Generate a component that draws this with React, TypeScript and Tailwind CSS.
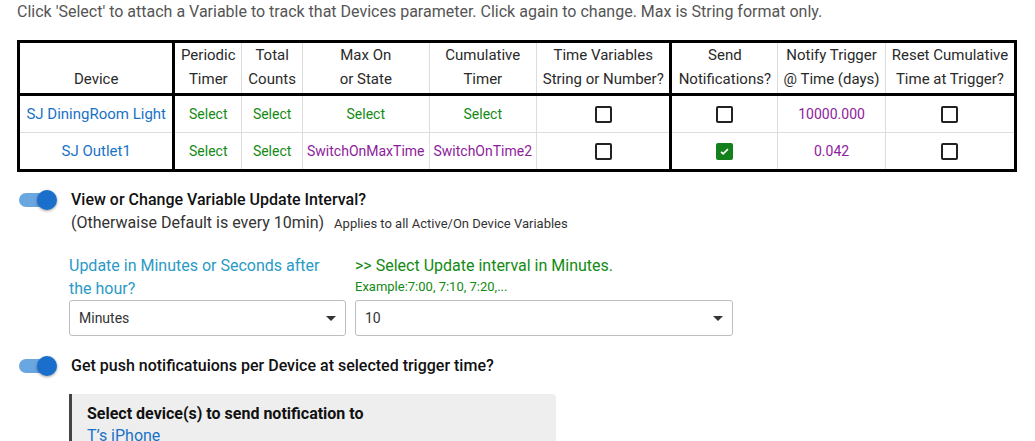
import React from 'react';

const font = { fontFamily: 'Roboto, "Noto Sans", Arial, sans-serif' };

function Checkbox({ checked }: { checked?: boolean }) {
  if (checked) {
    return (
      <span className="inline-flex h-[17px] w-[17px] items-center justify-center rounded-[2px] bg-[#14801c] align-middle">
        <svg viewBox="0 0 16 16" className="h-[11px] w-[11px]">
          <path d="M3 8.5l3 3 7-7" fill="none" stroke="#fff" strokeWidth="2.4" />
        </svg>
      </span>
    );
  }
  return <span className="inline-block h-[17px] w-[17px] rounded-[2px] border-2 border-[#222] align-middle" />;
}

function Toggle() {
  return (
    <div className="relative h-[20px] w-[38px] shrink-0">
      <div className="absolute left-0 top-[3px] h-[14px] w-[34px] rounded-full bg-[#6aa6e0]" />
      <div className="absolute right-0 top-0 h-[20px] w-[20px] rounded-full bg-[#1b6fcc] shadow-[0_1px_3px_rgba(0,0,0,0.4)]" />
    </div>
  );
}

function Select({ value, className }: { value: string; className: string }) {
  return (
    <div className={`flex h-[36px] items-center justify-between rounded-[3px] border border-[#bdbdbd] bg-white pl-[9px] pr-[9px] text-[14px] text-[#333] ${className}`}>
      <span>{value}</span>
      <svg viewBox="0 0 10 5" className="h-[5px] w-[10px]">
        <path d="M0 0h10L5 5z" fill="#333" />
      </svg>
    </div>
  );
}

const th = 'px-1 pt-0 pb-[2px] align-bottom font-normal leading-[24px] text-[15px] text-[#2a2a2a]';
const td = 'h-[38px] px-1 py-0 text-center align-middle';

export default function App() {
  return (
    <div className="min-h-screen bg-white text-[#222]" style={font}>
      <p className="px-[17px] pt-[1px] text-[16px] leading-[22px] text-[#555]">
        Click 'Select' to attach a Variable to track that Devices parameter. Click again to change. Max is String format only.
      </p>

      <table className="ml-[17px] mt-[17px] w-[1000px] border-collapse border-[3px] border-black text-center">
        <colgroup>
          <col className="w-[158px]" />
          <col className="w-[68px]" />
          <col className="w-[61px]" />
          <col className="w-[123px]" />
          <col className="w-[105px]" />
          <col className="w-[137px]" />
          <col className="w-[107px]" />
          <col className="w-[109px]" />
          <col className="w-[132px]" />
        </colgroup>
        <thead>
          <tr className="border-b-[3px] border-black">
            <th className={`${th} border-r-[3px] border-black`}>Device</th>
            <th className={`${th} border-r border-[#ddd]`}>Periodic<br />Timer</th>
            <th className={`${th} border-r border-[#ddd]`}>Total<br />Counts</th>
            <th className={`${th} border-r border-[#ddd]`}>Max On<br />or State</th>
            <th className={`${th} border-r border-[#ddd]`}>Cumulative<br />Timer</th>
            <th className={`${th} border-r-[3px] border-black`}>Time Variables<br />String or Number?</th>
            <th className={`${th} border-r border-[#ddd]`}>Send<br />Notifications?</th>
            <th className={`${th} border-r border-[#ddd]`}>Notify Trigger<br />@ Time (days)</th>
            <th className={th}>Reset Cumulative<br />Time at Trigger?</th>
          </tr>
        </thead>
        <tbody className="text-[14px]">
          <tr className="border-b border-[#ddd]">
            <td className={`${td} border-r-[3px] border-black text-[15px] text-[#1a72c6]`}>SJ DiningRoom Light</td>
            <td className={`${td} border-r border-[#ddd] text-[#138a13]`}>Select</td>
            <td className={`${td} border-r border-[#ddd] text-[#138a13]`}>Select</td>
            <td className={`${td} border-r border-[#ddd] text-[#138a13]`}>Select</td>
            <td className={`${td} border-r border-[#ddd] text-[#138a13]`}>Select</td>
            <td className={`${td} border-r-[3px] border-black`}><Checkbox /></td>
            <td className={`${td} border-r border-[#ddd]`}><Checkbox /></td>
            <td className={`${td} border-r border-[#ddd] text-[#8e1c9c]`}>10000.000</td>
            <td className={td}><Checkbox /></td>
          </tr>
          <tr>
            <td className={`${td} border-r-[3px] border-black text-[15px] text-[#1a72c6]`}>SJ Outlet1</td>
            <td className={`${td} border-r border-[#ddd] text-[#138a13]`}>Select</td>
            <td className={`${td} border-r border-[#ddd] text-[#138a13]`}>Select</td>
            <td className={`${td} border-r border-[#ddd] text-[#8e1c9c]`}>SwitchOnMaxTime</td>
            <td className={`${td} border-r border-[#ddd] text-[#8e1c9c]`}>SwitchOnTime2</td>
            <td className={`${td} border-r-[3px] border-black`}><Checkbox /></td>
            <td className={`${td} border-r border-[#ddd]`}><Checkbox checked /></td>
            <td className={`${td} border-r border-[#ddd] text-[#8e1c9c]`}>0.042</td>
            <td className={td}><Checkbox /></td>
          </tr>
        </tbody>
      </table>

      <div className="mt-[17px] flex items-start gap-[14px] pl-[19px]">
        <div className="pt-[1px]"><Toggle /></div>
        <div>
          <div className="text-[16px] font-medium leading-[22px] text-[#111]">View or Change Variable Update Interval?</div>
          <div className="flex items-baseline gap-[10px] leading-[23px]">
            <span className="text-[16px] text-[#333]">(Otherwaise Default is every 10min)</span>
            <span className="text-[13px] text-[#333]">Applies to all Active/On Device Variables</span>
          </div>
        </div>
      </div>

      <div className="mt-[19px] flex gap-[9px] pl-[69px]">
        <div className="w-[277px]">
          <div className="h-[43px] pr-[14px] text-[16px] leading-[23px] text-[#2a9ac6]">Update in Minutes or Seconds after the hour?</div>
          <Select value="Minutes" className="mt-[3px] w-[277px]" />
        </div>
        <div className="w-[378px]">
          <div className="text-[16px] leading-[23px] text-[#138a13]">&gt;&gt; Select Update interval in Minutes.</div>
          <div className="h-[20px] text-[13px] leading-[20px] text-[#138a13]">Example:7:00, 7:10, 7:20,...</div>
          <Select value="10" className="mt-[3px] w-[378px]" />
        </div>
      </div>

      <div className="mt-[19px] flex items-center gap-[14px] pl-[19px]">
        <Toggle />
        <div className="text-[16px] font-medium leading-[22px] text-[#111]">Get push notificatuions per Device at selected trigger time?</div>
      </div>

      <div className="ml-[69px] mt-[17px] w-[487px] rounded-tr-[4px] border-l-[3px] border-[#444] bg-[#eeeeee] pl-[15px] pt-[9px] pb-[10px]">
        <div className="text-[16px] font-bold leading-[22px] text-[#111]">Select device(s) to send notification to</div>
        <div className="text-[16px] leading-[22px] text-[#1a72c6]">T’s iPhone</div>
      </div>
    </div>
  );
}
